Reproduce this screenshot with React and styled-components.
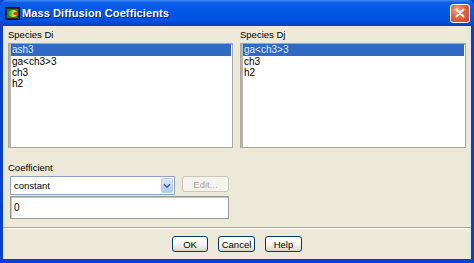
import styled, { createGlobalStyle } from 'styled-components';

const GlobalStyle = createGlobalStyle`
    html, body {
        margin: 0;
        padding: 0;
        background: #ffffff;
    }
    * {
        box-sizing: border-box;
    }
`;

const font = `"Liberation Sans", Arial, sans-serif`;

const Window = styled.div`
    width: 474px;
    height: 263px;
    display: flex;
    flex-direction: column;
    background: #0a3fd4;
    font-family: ${font};
    overflow: hidden;
`;

const TitleBar = styled.div`
    height: 26px;
    flex: none;
    display: flex;
    align-items: center;
    padding: 0 4px 0 5px;
    background: linear-gradient(to bottom, #3f8cf3 0%, #0b5fe9 10%, #0056e6 45%, #0052e0 80%, #003fc2 100%);
    border-radius: 6px 6px 0 0;
`;

const Title = styled.span`
    flex: 1;
    margin-left: 2px;
    color: #ffffff;
    font-weight: bold;
    font-size: 11px;
    text-shadow: 1px 1px 0 #0a1e8a;
    letter-spacing: 0.1px;
`;

const CloseButton = styled.div`
    width: 20px;
    height: 19px;
    border: 1px solid #ffffff;
    border-radius: 3px;
    background: radial-gradient(circle at 35% 30%, #f3a68e 0%, #e2643f 45%, #c9441f 100%);
    display: flex;
    align-items: center;
    justify-content: center;
`;

const Client = styled.div`
    flex: 1;
    margin: 0 3px 4px 3px;
    background: #ece9d8;
    display: flex;
    flex-direction: column;
    font-size: 9.5px;
    color: #000000;
`;

const Columns = styled.div`
    display: grid;
    grid-template-columns: 225px 226px;
    gap: 7px;
    padding: 3px 5px 0 5px;
`;

const Column = styled.div`
    display: flex;
    flex-direction: column;
`;

const Label = styled.div`
    height: 12px;
    line-height: 12px;
    margin-bottom: 2px;
    padding-left: ${props => props.indent || 0}px;
`;

const List = styled.div`
    height: 105px;
    background: #ffffff;
    border: 1px solid #a7a6a0;
    box-shadow: inset 2px 1px 0 #b8b6ac;
    padding: 0 1px 0 2px;
    font-size: 10px;
`;

const Item = styled.div`
    height: ${props => props.first ? 12 : 11}px;
    line-height: ${props => props.first ? 12 : 11}px;
    padding-left: 1px;
    background: ${props => props.selected ? '#316ac5' : 'transparent'};
    color: ${props => props.selected ? '#dfe9ff' : '#000000'};
`;

const Coefficient = styled.div`
    display: flex;
    flex-direction: column;
    padding: 14px 0 0 5px;
`;

const Controls = styled.div`
    display: flex;
    flex-direction: column;
    gap: 1px;
    padding-left: 2px;
    width: 221px;
`;

const SelectRow = styled.div`
    display: flex;
    align-items: flex-start;
    gap: 7px;
`;

const Select = styled.div`
    width: 165px;
    height: 19px;
    border: 1px solid #8ea4c1;
    background: #ffffff;
    display: flex;
    align-items: center;
    padding: 1px;
`;

const SelectValue = styled.span`
    flex: 1;
    padding-left: 2px;
`;

const Arrow = styled.div`
    width: 12px;
    height: 15px;
    border-radius: 2px;
    background: linear-gradient(to bottom, #dbe7fd 0%, #c2d4f8 60%, #b2c7f2 100%);
    border: 1px solid #b9cdf4;
    display: flex;
    align-items: center;
    justify-content: center;
`;

const Button = styled.div`
    width: ${props => props.w || 37}px;
    height: 16px;
    border-radius: 3px;
    border: 1px solid ${props => props.disabled ? '#cac8bb' : '#003c74'};
    background: ${props => props.disabled
        ? '#f4f3ee'
        : 'linear-gradient(to bottom, #ffffff 0%, #f6f5f0 50%, #e6e3d8 85%, #d6d0c5 100%)'};
    color: ${props => props.disabled ? '#aca899' : '#000000'};
    display: flex;
    align-items: center;
    justify-content: center;
    font-size: 9.5px;
`;

const Input = styled.div`
    height: 23px;
    background: #ffffff;
    border: 1px solid #9a9a94;
    box-shadow: inset 1px 1px 0 #c5c3b8;
    display: flex;
    align-items: center;
    padding-left: 3px;
    font-size: 10px;
`;

const Separator = styled.div`
    margin-top: 8px;
    height: 2px;
    border-top: 1px solid #aca899;
    border-bottom: 1px solid #ffffff;
`;

const ButtonBar = styled.div`
    display: flex;
    justify-content: center;
    gap: 10px;
    padding-top: 7px;
`;

function FluentIcon() {
    return (
        <svg width="15" height="13" viewBox="0 0 15 13">
            <defs>
                <linearGradient id="fl" x1="0" x2="1" y1="0" y2="0">
                    <stop offset="0" stopColor="#1f9a3a" />
                    <stop offset="0.45" stopColor="#9fd82a" />
                    <stop offset="0.7" stopColor="#f3e21b" />
                    <stop offset="1" stopColor="#e23a1c" />
                </linearGradient>
            </defs>
            <rect x="0.5" y="0.5" width="14" height="12" fill="#1c2b1f" stroke="#0b120c" />
            <rect x="2" y="2" width="11" height="9" fill="#1f7d33" />
            <ellipse cx="8" cy="6.5" rx="5" ry="3.6" fill="url(#fl)" />
            <ellipse cx="10.5" cy="6.5" rx="2" ry="1.6" fill="#d8281a" />
        </svg>
    );
}

function CloseIcon() {
    return (
        <svg width="10" height="10" viewBox="0 0 10 10">
            <path d="M1.5 1.5 L8.5 8.5 M8.5 1.5 L1.5 8.5" stroke="#ffffff" strokeWidth="1.8" strokeLinecap="round" />
        </svg>
    );
}

function ChevronIcon() {
    return (
        <svg width="8" height="6" viewBox="0 0 8 6">
            <path d="M1 1.2 L4 4.2 L7 1.2" fill="none" stroke="#4d6185" strokeWidth="1.6" />
        </svg>
    );
}

function SpeciesList({ title, items, indent }) {
    return (
        <Column>
            <Label indent={indent}>{title}</Label>
            <List>
                {items.map((item, i) => (
                    <Item key={item} first={i === 0} selected={i === 0}>{item}</Item>
                ))}
            </List>
        </Column>
    );
}

export default function App() {
    return (
        <>
            <GlobalStyle />
            <Window>
                <TitleBar>
                    <FluentIcon />
                    <Title>Mass Diffusion Coefficients</Title>
                    <CloseButton><CloseIcon /></CloseButton>
                </TitleBar>
                <Client>
                    <Columns>
                        <SpeciesList title="Species Di" items={['ash3', 'ga<ch3>3', 'ch3', 'h2']} />
                        <SpeciesList title="Species Dj" indent={0} items={['ga<ch3>3', 'ch3', 'h2']} />
                    </Columns>
                    <Coefficient>
                        <Label>Coefficient</Label>
                        <Controls>
                            <SelectRow>
                                <Select>
                                    <SelectValue>constant</SelectValue>
                                    <Arrow><ChevronIcon /></Arrow>
                                </Select>
                                <Button disabled w={47}>Edit...</Button>
                            </SelectRow>
                            <Input>0</Input>
                        </Controls>
                    </Coefficient>
                    <Separator />
                    <ButtonBar>
                        <Button w={36}>OK</Button>
                        <Button>Cancel</Button>
                        <Button>Help</Button>
                    </ButtonBar>
                </Client>
            </Window>
        </>
    );
}
